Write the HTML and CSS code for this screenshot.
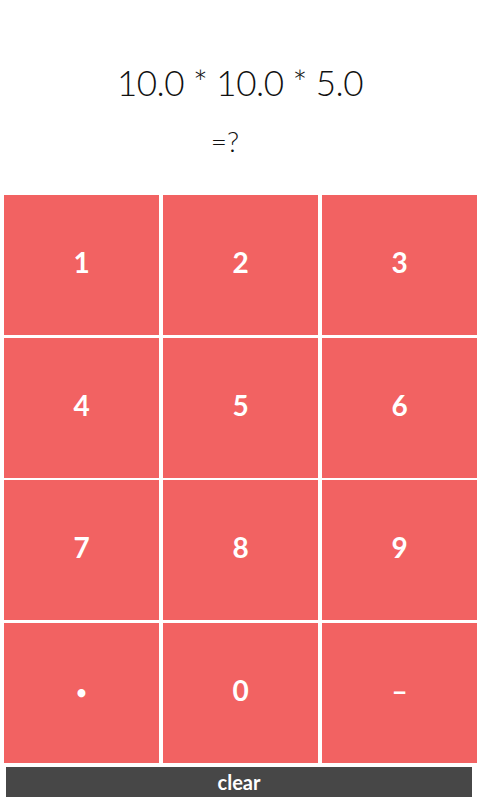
FILE: index.html
```html
<!DOCTYPE html>
<html>
<head>
<meta charset="utf-8">
<link rel="stylesheet" href="styles.css">
</head>
<body>
<div class="app">
  <div class="display">
    <div class="expr">10.0 * 10.0 * 5.0</div>
    <div class="result">=?</div>
  </div>
  <div class="pad">
    <div class="key">1</div>
    <div class="key">2</div>
    <div class="key">3</div>
    <div class="key">4</div>
    <div class="key">5</div>
    <div class="key">6</div>
    <div class="key">7</div>
    <div class="key">8</div>
    <div class="key">9</div>
    <div class="key"><span class="dot">•</span></div>
    <div class="key">0</div>
    <div class="key">–</div>
  </div>
  <div class="clear">clear</div>
</div>
</body>
</html>
```

FILE: styles.css
```css
html, body {
  margin: 0;
  padding: 0;
  background: #ffffff;
}
.app {
  width: 480px;
  height: 800px;
  display: flex;
  flex-direction: column;
  font-family: Lato, "Open Sans", sans-serif;
}
.display {
  height: 195px;
  display: flex;
  flex-direction: column;
  align-items: center;
}
.expr {
  margin-top: 58px;
  font-size: 35px;
  font-weight: 300;
  line-height: 48px;
  letter-spacing: -0.5px;
  color: #111111;
}
.result {
  margin-top: 17px;
  font-size: 28px;
  font-weight: 300;
  line-height: 36px;
  color: #111111;
  padding-right: 30px;
}
.pad {
  margin: 0 3px 0 4px;
  display: grid;
  grid-template-columns: repeat(3, 155px);
  grid-auto-rows: 140px;
  column-gap: 4px;
  row-gap: 2.5px;
}
.key {
  background: #f26262;
  color: #ffffff;
  font-size: 28px;
  font-weight: 700;
  display: flex;
  align-items: center;
  justify-content: center;
  padding-bottom: 6px;
  box-sizing: border-box;
}
.dot {
  font-size: 18px;
  padding-top: 4px;
}
.clear {
  margin: 4.5px 8px 0 6px;
  height: 30px;
  background: #474747;
  color: #ffffff;
  font-size: 20px;
  font-weight: 700;
  display: flex;
  align-items: center;
  justify-content: center;
  line-height: 1;
}
```
